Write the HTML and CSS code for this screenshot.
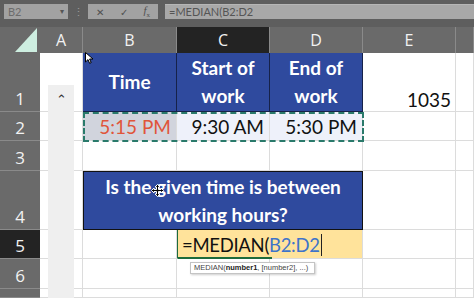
FILE: index.html
```html
<!DOCTYPE html>
<html lang="en">
<head>
    <meta charset="UTF-8">
    <meta name="viewport" content="width=device-width, initial-scale=1.0">
    <title>MEDIAN</title>
    <link rel="stylesheet" href="styles.css">
</head>
<body>
    <div class="toolbar">
        <div class="namebox">B2<span class="drop">&#9662;</span></div>
        <div class="grip">&#8942;</div>
        <div class="btns">
            <span class="btn">&#10005;</span>
            <span class="btn">&#10003;</span>
            <span class="btn fx"><i>f</i><sub>x</sub></span>
        </div>
        <div class="formula">=MEDIAN(B2:D2</div>
    </div>

    <div class="sheet">
        <div class="corner"><span class="tri"></span></div>
        <div class="ch">A</div>
        <div class="ch">B</div>
        <div class="ch on">C</div>
        <div class="ch">D</div>
        <div class="ch">E</div>
        <div class="ch"></div>

        <div class="rh">1</div>
        <div class="cell"></div>
        <div class="cell hd">Time</div>
        <div class="cell hd">Start of<br>work</div>
        <div class="cell hd">End of<br>work</div>
        <div class="cell num">1035</div>
        <div class="cell"></div>

        <div class="rh">2</div>
        <div class="cell"></div>
        <div class="cell val sel">5:15 PM</div>
        <div class="cell val rng">9:30 AM</div>
        <div class="cell val rng">5:30 PM</div>
        <div class="cell"></div>
        <div class="cell"></div>

        <div class="rh">3</div>
        <div class="cell"></div>
        <div class="cell"></div>
        <div class="cell"></div>
        <div class="cell"></div>
        <div class="cell"></div>
        <div class="cell"></div>

        <div class="rh">4</div>
        <div class="cell"></div>
        <div class="cell q">Is the given time is between<br>working hours?</div>
        <div class="cell"></div>
        <div class="cell"></div>

        <div class="rh on">5</div>
        <div class="cell"></div>
        <div class="cell"></div>
        <div class="cell edit">=MEDIAN(<span class="ref">B2:D2</span><span class="caret"></span></div>
        <div class="cell"></div>
        <div class="cell"></div>

        <div class="rh">6</div>
        <div class="cell"></div>
        <div class="cell"></div>
        <div class="cell"></div>
        <div class="cell"></div>
        <div class="cell"></div>
        <div class="cell"></div>

        <div class="rh"></div>
        <div class="cell"></div>
        <div class="cell"></div>
        <div class="cell"></div>
        <div class="cell"></div>
        <div class="cell"></div>
        <div class="cell"></div>

        <div class="outline"><span class="up">&#8963;</span></div>
        <div class="ants"></div>
        <div class="tip">MEDIAN(<b>number1</b>, [number2], ...)</div>

        <svg class="pointer" width="9" height="12" viewBox="0 0 9 12">
            <path d="M0.5 0.5 L0.5 10 L3 7.6 L4.6 11.3 L6.2 10.6 L4.6 7 L8 7 Z" fill="#fff" stroke="#000" stroke-width="1"/>
        </svg>
        <svg class="move" width="13" height="13" viewBox="0 0 13 13">
            <path d="M6.5 0.5 L9 3 L7.5 3 L7.5 5.5 L10 5.5 L10 4 L12.5 6.5 L10 9 L10 7.5 L7.5 7.5 L7.5 10 L9 10 L6.5 12.5 L4 10 L5.5 10 L5.5 7.5 L3 7.5 L3 9 L0.5 6.5 L3 4 L3 5.5 L5.5 5.5 L5.5 3 L4 3 Z" fill="#000" stroke="#fff" stroke-width="1"/>
        </svg>
    </div>
</body>
</html>
```

FILE: styles.css
```css
* {
    box-sizing: border-box;
}
body {
    margin: 0;
    width: 474px;
    height: 298px;
    overflow: hidden;
    background-color: #5e5e5e;
    font-family: Lato, "Open Sans", sans-serif;
}
.toolbar {
    height: 27px;
    display: flex;
    align-items: flex-start;
    padding-top: 4px;
    padding-left: 4px;
    background-color: #5e5e5e;
}
.namebox {
    width: 64px;
    height: 15px;
    background-color: #a2a2a2;
    color: #6c6c6c;
    font-size: 11px;
    line-height: 15px;
    padding-left: 4px;
    display: flex;
    justify-content: space-between;
}
.drop {
    font-size: 8px;
    padding-right: 4px;
    color: #555;
}
.grip {
    width: 20px;
    text-align: center;
    color: #9a9a9a;
    font-size: 11px;
    line-height: 15px;
}
.btns {
    width: 70px;
    height: 15px;
    background-color: #a2a2a2;
    display: flex;
    justify-content: space-around;
    align-items: center;
    color: #505050;
    font-size: 10px;
}
.fx {
    font-family: "Liberation Serif", serif;
    font-size: 11px;
}
.fx sub {
    font-size: 7px;
}
.formula {
    margin-left: 7px;
    flex: 1;
    height: 15px;
    background-color: #a8a8a8;
    border-top: 1px solid #b6b6b6;
    color: #555;
    font-size: 11px;
    line-height: 14px;
    padding-left: 4px;
}
.sheet {
    position: relative;
    display: grid;
    grid-template-columns: 40px 43px 94px 93px 93px 93px 18px;
    grid-template-rows: 26px 59px 29px 30px 59px 29px 30px 9px;
    background-color: #fff;
}
.corner {
    background-color: #6a6a6a;
    position: relative;
}
.tri {
    position: absolute;
    right: 3px;
    bottom: 1px;
    width: 0;
    height: 0;
    border-left: 22px solid transparent;
    border-bottom: 24px solid #cdeee0;
}
.ch {
    background-color: #6a6a6a;
    color: #f2f2f2;
    border-right: 1px solid #8a8a8a;
    font-family: "Open Sans", sans-serif;
    font-size: 16px;
    display: flex;
    align-items: center;
    justify-content: center;
}
.ch.on {
    background-color: #232323;
}
.rh {
    background-color: #6a6a6a;
    color: #f2f2f2;
    border-bottom: 1px solid #8a8a8a;
    font-family: "Open Sans", sans-serif;
    font-size: 17px;
    display: flex;
    align-items: flex-end;
    justify-content: center;
    padding-bottom: 1px;
}
.rh.on {
    background-color: #232323;
}
.cell {
    border-right: 1px solid #dcdcdc;
    border-bottom: 1px solid #dcdcdc;
}
.hd {
    background-color: #2f4a9e;
    border-right: 1px solid #16224a;
    border-bottom: 1px solid #16224a;
    color: #fff;
    font-weight: bold;
    font-size: 19px;
    line-height: 28px;
    text-align: center;
    display: flex;
    align-items: center;
    justify-content: center;
}
.num {
    font-size: 19px;
    text-align: right;
    padding-right: 4px;
    display: flex;
    align-items: flex-end;
    justify-content: flex-end;
    color: #111;
}
.val {
    font-size: 19px;
    display: flex;
    align-items: center;
    justify-content: flex-end;
    padding-right: 5px;
    color: #111;
}
.sel {
    background-color: #d1d4dd;
    color: #e0553a;
}
.rng {
    background-color: #eef1fa;
}
.q {
    grid-column: span 3;
    background-color: #2f4a9e;
    border: 1px solid #111;
    color: #fff;
    font-weight: bold;
    font-size: 19px;
    line-height: 28px;
    text-align: center;
    display: flex;
    align-items: center;
    justify-content: center;
}
.edit {
    grid-column: span 2;
    position: relative;
    background-color: #ffe39b;
    border-left: 1px solid #1d6b3b;
    color: #111;
    font-size: 18.5px;
    letter-spacing: -0.3px;
    display: flex;
    align-items: center;
    padding-left: 4px;
    padding-top: 1px;
}
.edit::after {
    content: "";
    position: absolute;
    left: 0;
    bottom: -1px;
    width: 94px;
    height: 2px;
    background-color: #1d6b3b;
}
.ref {
    color: #3f74c9;
}
.caret {
    width: 1px;
    height: 22px;
    background-color: #222;
    margin-left: 1px;
}
.outline {
    position: absolute;
    left: 48px;
    top: 58px;
    width: 26px;
    bottom: 0;
    background-color: #efefef;
    text-align: center;
}
.up {
    display: block;
    margin-top: 8px;
    font-size: 13px;
    color: #333;
    line-height: 12px;
}
.ants {
    position: absolute;
    left: 83px;
    top: 85px;
    width: 281px;
    height: 30px;
    border: 2px dashed #2a7a6b;
}
.tip {
    position: absolute;
    left: 190px;
    top: 235px;
    width: 125px;
    height: 12px;
    background-color: #fff;
    border: 1px solid #c4c4c4;
    box-shadow: 1px 1px 2px rgba(0, 0, 0, 0.2);
    font-family: "Liberation Sans", sans-serif;
    font-size: 7.5px;
    line-height: 10px;
    padding-left: 3px;
    color: #444;
    white-space: nowrap;
}
.tip b {
    color: #222;
}
.pointer {
    position: absolute;
    left: 85px;
    top: 25px;
}
.move {
    position: absolute;
    left: 151px;
    top: 157px;
}
```
